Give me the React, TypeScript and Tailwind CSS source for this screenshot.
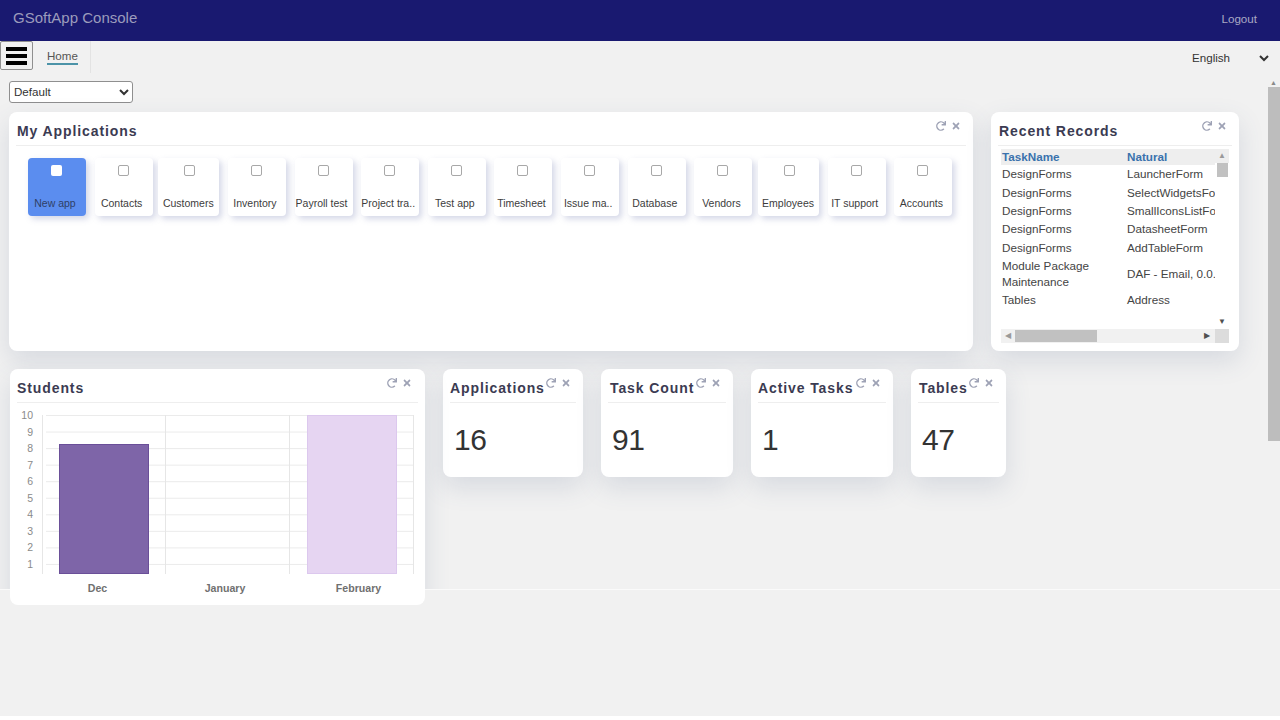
import React from "react";
import { FaRedo, FaTimes } from "react-icons/fa";

const apps = ["New app","Contacts","Customers","Inventory","Payroll test","Project tra..","Test app","Timesheet","Issue ma..","Database","Vendors","Employees","IT support","Accounts"];
const rows: [string,string][] = [["DesignForms","LauncherForm"],["DesignForms","SelectWidgetsFo"],["DesignForms","SmallIconsListFo"],["DesignForms","DatasheetForm"],["DesignForms","AddTableForm"],["Module Package Maintenance","DAF - Email, 0.0."],["Tables","Address"]];

const shadow = "shadow-[0_10px_26px_rgba(70,85,130,0.15)]";

function Tools({ className }: { className: string }) {
  return (
    <div className={"flex items-center gap-[5px] text-[#9ea2b5] " + className}>
      <FaRedo className="w-[10px] h-[10px]" />
      <FaTimes className="w-[10px] h-[10px]" />
    </div>
  );
}

function Card({ title, className, children, head }: { title: string; className: string; children?: React.ReactNode; head: string }) {
  return (
    <section className={"bg-white rounded-[8px] px-[7px] shrink-0 " + className}>
      <div className={"flex justify-between h-[34px] border-b border-[#eeeeee] " + head}>
        <h2 className="text-[14px] font-bold tracking-[0.9px] text-[#3b3b52] leading-[16px] pt-[11px] whitespace-nowrap">{title}</h2>
        <Tools className="h-[10px] mt-[9px]" />
      </div>
      {children}
    </section>
  );
}

function Stat({ title, value, className, head }: { title: string; value: string; className: string; head: string }) {
  return (
    <Card title={title} className={"h-[108px] " + shadow + " " + className} head={head}>
      <div className="text-[30px] tracking-[-0.5px] leading-[34px] text-[#333333] pl-[4px] pt-[20px]">{value}</div>
    </Card>
  );
}

function Chart() {
  const ys = [10,9,8,7,6,5,4,3,2,1];
  return (
    <svg width="415" height="202" viewBox="0 0 415 202" className="block -ml-[7px]" style={{ fontFamily: '"Liberation Sans", Arial, sans-serif' }}>
      {ys.map((n, i) => {
        const y = 12.5 + i * 16.55;
        return (
          <g key={n}>
            <line x1="36" x2="404" y1={y} y2={y} stroke="#ebebeb" />
            <text x="23" y={y + 3.5} fontSize="10.5" fill="#8a8a8a" textAnchor="end">{n}</text>
          </g>
        );
      })}
      {[32.5, 155.5, 279.5, 403.5].map((x) => (
        <line key={x} x1={x} x2={x} y1="12" y2="171" stroke="#e6e6e6" />
      ))}
      <rect x="49.5" y="41.5" width="89" height="129" fill="#7e65a8" stroke="#6a4f98" />
      <rect x="297.5" y="12.5" width="89" height="158" fill="#e6d5f2" stroke="#dcc8ee" />
      <g fontSize="10.6" fontWeight="700" fill="#707070" textAnchor="middle">
        <text x="87.5" y="189">Dec</text>
        <text x="215" y="189">January</text>
        <text x="348.5" y="189">February</text>
      </g>
    </svg>
  );
}

export default function App() {
  return (
    <div className="w-[1280px] h-[720px] overflow-hidden bg-white text-[#333333] font-['Liberation_Sans',Arial,sans-serif]">
      <header className="h-[41px] bg-[#191970] flex items-center justify-between pl-[13px] pr-[23px] pb-[4px]">
        <span className="text-[15px] text-[#9c9cbc]">GSoftApp Console</span>
        <span className="text-[11.6px] text-[#a9a9c4]">Logout</span>
      </header>
      <nav className="h-[34px] bg-[#f1f1f1] flex items-start">
        <button className="w-[33px] h-[29px] border border-[#8f8f8f] rounded-[2px] flex flex-col items-center justify-center gap-[3px] bg-[#f1f1f1]">
          <span className="block w-[21px] h-[4px] bg-black" />
          <span className="block w-[21px] h-[4px] bg-black" />
          <span className="block w-[21px] h-[4px] bg-black" />
        </button>
        <div className="h-[32px] w-[58px] border-r border-[#e3e3e3] pl-[14px] pt-[8px]">
          <span className="block w-[31px] text-[11.6px] leading-[14px] text-[#555555] border-b-2 border-[#4c93a8] whitespace-nowrap">Home</span>
        </div>
        <div className="ml-auto mr-[8px] mt-[4px]">
          <select className="w-[86px] h-[20px] text-[11.6px] bg-transparent text-[#333333] pl-[2px] outline-none">
            <option>English</option>
          </select>
        </div>
      </nav>
      <div className="flex h-[514px] bg-[#f1f1f1]">
        <main className="flex-1 pl-[9px] pt-[6px]">
          <select className="block w-[124px] h-[22px] text-[11.6px] bg-white border border-[#8f8f8f] rounded-[3px] text-[#333333] outline-none pl-0 pb-[2px]">
            <option>Default</option>
          </select>
          <div className="flex gap-[18px] mt-[9px]">
            <Card title="My Applications" className={"w-[964px] h-[239px] " + shadow} head="pl-px pr-[5px]">
              <div className="flex pl-[12px] pt-[12px]">
                {apps.map((a, i) => (
                  <div key={a} className="w-[66.65px] shrink-0">
                    <div className={"h-[58px] rounded-[4px] flex flex-col items-center pt-[7px] shadow-[3px_3px_6px_rgba(100,110,170,0.28)] " + (i === 0 ? "bg-[#5b8def] w-[58px]" : a === "Customers" || a === "Employees" ? "bg-white w-[61px] -ml-[3px] pl-[3px]" : "bg-white w-[58px]")}>
                      <input type="checkbox" readOnly className={"w-[11px] h-[11px] -ml-[1px] shrink-0 appearance-none bg-white rounded-[2px] " + (i === 0 ? "" : "border border-[#a8a8a8]")} />
                      <span className={"text-[10.5px] leading-[13px] whitespace-nowrap mt-[21px] -ml-[4px] " + (i === 0 ? "text-[#2f3f66]" : "text-[#3c3c3c]")}>{a}</span>
                    </div>
                  </div>
                ))}
              </div>
            </Card>
            <Card title="Recent Records" className={"w-[248px] h-[239px] " + shadow} head="pl-px pr-[5px]">
              <div className="relative mt-[3px] ml-[3px] w-[228px] h-[194px] text-[11.7px] leading-[16px] overflow-hidden">
                <div className="w-[214px] overflow-hidden">
                  <div className="w-[240px] flex h-[16px] bg-[#eeeeee] font-bold text-[#3a72ad]">
                    <span className="w-[125px] pl-px">TaskName</span><span className="pl-px">Natural</span>
                  </div>
                  {rows.map((r) => (
                    <div key={r[1]} className="w-[214px] flex items-center py-[1.2px]">
                      <span className="w-[125px] shrink-0 pl-[1px] pr-[10px] text-[#444444]">{r[0]}</span>
                      <span className="pl-[1px] whitespace-nowrap text-[#444444]">{r[1]}</span>
                    </div>
                  ))}
                </div>
                <div className="absolute right-0 top-0 w-[14px] h-[180px] bg-white">
                  <div className="h-[14px] flex justify-center items-center text-[#9a9a9a] text-[8px] bg-[#eeeeee]">▲</div>
                  <div className="w-[11px] h-[14px] ml-[2px] bg-[#c1c1c1]" />
                  <div className="absolute bottom-0 left-0 w-full h-[14px] flex justify-center items-center text-[#505050] text-[8px]">▼</div>
                </div>
                <div className="absolute left-0 bottom-0 w-full h-[14px] bg-[#f1f1f1] flex items-center">
                  <span className="w-[14px] text-center text-[8px] text-[#9a9a9a]">◀</span>
                  <div className="w-[82px] h-[12px] bg-[#c1c1c1]" />
                  <span className="ml-[107px] text-[8px] text-[#505050]">▶</span>
                  <div className="ml-auto w-[14px] h-[14px] bg-[#dcdcdc]" />
                </div>
              </div>
            </Card>
          </div>
          <div className="flex items-start gap-[18px] mt-[18px] ml-px">
            <div className="relative w-[415px] h-[236px] shrink-0">
              <div className={"absolute inset-0 z-0 rounded-[8px] " + shadow} />
              <Card title="Students" className="relative z-[2] w-[415px] h-[236px]" head="pr-[6px]">
                <Chart />
              </Card>
            </div>
            <Stat title="Applications" value="16" className="w-[140px]" head="pr-[5px]" />
            <Stat title="Task Count" value="91" className="w-[132px]" head="pl-[2px] pr-[5px]" />
            <Stat title="Active Tasks" value="1" className="w-[142px]" head="pr-[5px]" />
            <Stat title="Tables" value="47" className="w-[95px]" head="pl-px pr-[5px]" />
          </div>
        </main>
        <aside className="w-[13px] shrink-0 pt-[3px] flex flex-col items-center">
          <div className="h-[9px] text-[7px] leading-[9px] text-[#8a8a8a]">▲</div>
          <div className="w-[12px] h-[354px] bg-[#bdbdbd]" />
        </aside>
      </div>
      <footer className="relative z-[1] h-[127px] bg-[#f1f1f1] border-t-[1.5px] border-[#fafafa]" />
    </div>
  );
}
